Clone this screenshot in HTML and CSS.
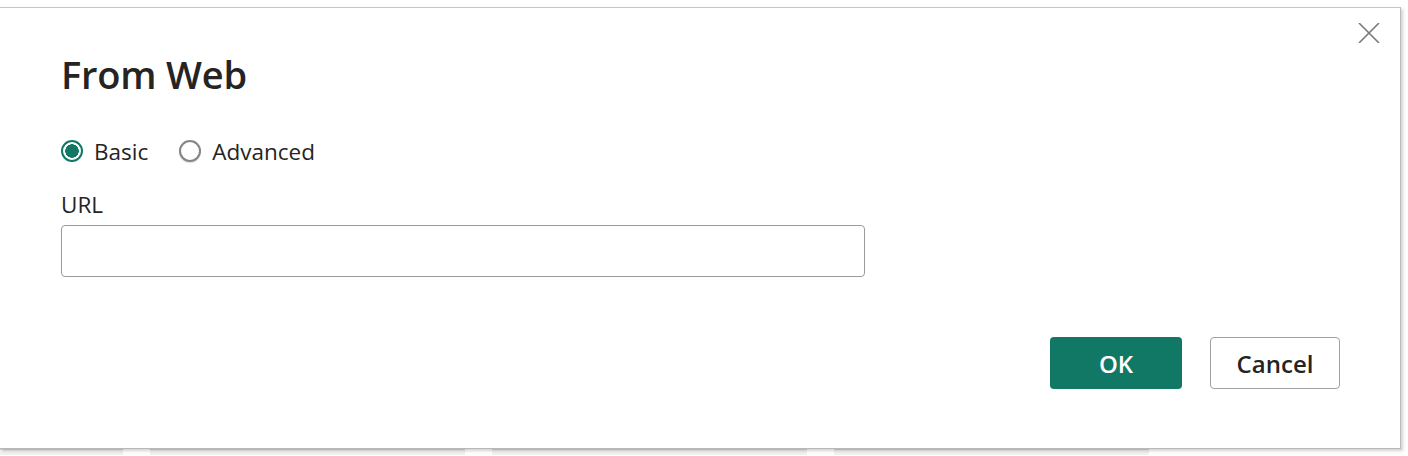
FILE: index.html
```html
<!DOCTYPE html>
<html>
<head>
<meta charset="utf-8">
<link rel="stylesheet" href="styles.css">
</head>
<body>
<div class="page">
  <div class="dialog">
    <button class="close" aria-label="Close">
      <svg width="22" height="20" viewBox="0 0 22 20"><path d="M1 0 L21 20 M21 0 L1 20" stroke="#7a7a7a" stroke-width="1.6" fill="none"/></svg>
    </button>
    <h1 class="title">From Web</h1>
    <div class="radios">
      <label class="radio"><span class="dot checked"></span><span>Basic</span></label>
      <label class="radio"><span class="dot"></span><span>Advanced</span></label>
    </div>
    <div class="field-label">URL</div>
    <div class="input"></div>
    <div class="actions">
      <button class="btn primary">OK</button>
      <button class="btn secondary">Cancel</button>
    </div>
  </div>
  <div class="under">
    <div class="tab t1"></div>
    <div class="tab t2"></div>
    <div class="tab t2"></div>
    <div class="tab t2"></div>
  </div>
</div>
</body>
</html>
```
FILE: styles.css
```css
html, body {
  margin: 0;
  padding: 0;
  background: #ffffff;
  overflow: hidden;
}
.page {
  width: 1408px;
  height: 456px;
  padding-top: 7px;
  box-sizing: border-box;
  font-family: "Open Sans", "Noto Sans", sans-serif;
  color: #252423;
}
.dialog {
  position: relative;
  width: 1401px;
  height: 442px;
  box-sizing: border-box;
  background: #fff;
  border-top: 1px solid #c6c6c6;
  border-right: 1px solid #bcbcbc;
  border-bottom: 1px solid #b8b8b8;
  box-shadow: 2px 2px 3px rgba(0,0,0,0.18);
  padding: 40px 0 0 61px;
  z-index: 1;
}
.close {
  position: absolute;
  top: 15px;
  right: 20px;
  width: 22px;
  height: 20px;
  padding: 0;
  border: none;
  background: none;
  display: flex;
}
.title {
  margin: 0;
  font-size: 38px;
  font-weight: 600;
  line-height: 52px;
  letter-spacing: -0.2px;
}
.radios {
  display: flex;
  gap: 31px;
  margin-top: 31px;
  height: 40px;
  align-items: center;
}
.radio {
  display: flex;
  align-items: center;
  gap: 11px;
  font-size: 22.5px;
}
.dot {
  width: 22px;
  height: 22px;
  box-sizing: border-box;
  border-radius: 50%;
  border: 2px solid #858585;
  box-shadow: 0 1px 1px rgba(0,0,0,0.15);
  background: #fff;
  display: inline-block;
}
.dot.checked {
  border: 2px solid #117865;
  background: radial-gradient(circle, #117865 0 6.5px, #fff 7px);
  box-shadow: none;
}
.field-label {
  margin-top: 19px;
  font-size: 22.5px;
  line-height: 30px;
}
.input {
  margin-top: 5px;
  width: 804px;
  height: 52px;
  box-sizing: border-box;
  border: 1px solid #9a9a9a;
  border-radius: 4px;
}
.actions {
  display: flex;
  justify-content: flex-end;
  gap: 28px;
  margin-top: 60px;
  margin-right: 60px;
}
.btn {
  height: 52px;
  box-sizing: border-box;
  border-radius: 4px;
  font-family: "Open Sans", "Noto Sans", sans-serif;
  font-size: 24px;
  font-weight: 600;
  padding: 0;
}
.primary {
  width: 132px;
  background: #117865;
  color: #fff;
  border: none;
}
.secondary {
  width: 130px;
  background: #fff;
  color: #252423;
  border: 1px solid #a0a0a0;
}
.under {
  display: flex;
  gap: 27px;
  padding-left: 0;
}
.tab {
  height: 6px;
  background: #f1f1f1;
  border-top: 1px solid #d6d6d6;
  box-sizing: border-box;
}
.t1 { width: 123px; }
.t2 { width: 315px; }
```
